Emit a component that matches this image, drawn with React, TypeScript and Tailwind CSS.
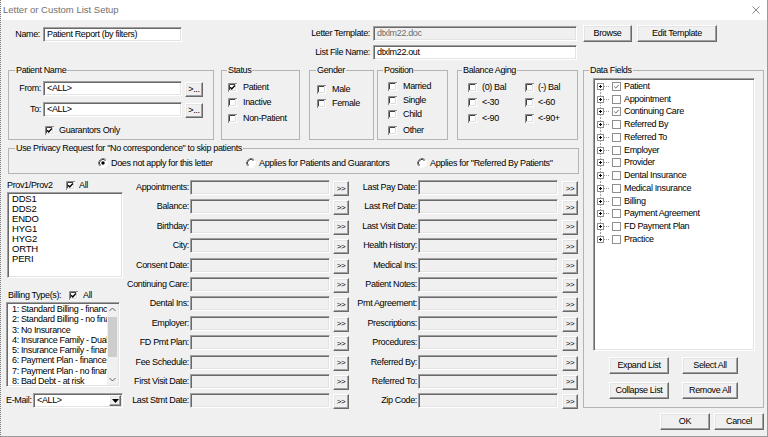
import React from "react";

const sunken =
  "border border-t-[#a0a0a0] border-l-[#a0a0a0] border-r-white border-b-white shadow-[inset_1px_1px_0_#696969,inset_-1px_-1px_0_#e3e3e3]";
const raised =
  "border border-t-white border-l-white border-r-[#696969] border-b-[#696969] shadow-[inset_-1px_-1px_0_#a0a0a0,inset_1px_1px_0_#e3e3e3] bg-[#f0f0f0]";

function Check({ checked }: { checked?: boolean }) {
  return (
    <svg width="9" height="9" viewBox="0 0 9 9" className="block shrink-0">
      <rect x="0" y="0" width="9" height="9" fill="#fff" />
      <path d="M0.5 9V0.5H9" stroke="#8a8a8a" fill="none" />
      <path d="M1.5 8V1.5H8" stroke="#404040" fill="none" />
      <path d="M1 7.5H7.5V1" stroke="#dcdcdc" fill="none" />
      {checked && (
        <path d="M2.2 4.3 L3.7 5.9 L6.9 2.6" stroke="#000" strokeWidth="1.4" fill="none" />
      )}
    </svg>
  );
}

function Radio({ checked }: { checked?: boolean }) {
  return (
    <svg width="10" height="10" viewBox="0 0 10 10" className="block shrink-0">
      <circle cx="5" cy="5" r="4.5" fill="#fff" />
      <path d="M1.82 8.18 A4.5 4.5 0 0 1 8.18 1.82" stroke="#808080" fill="none" />
      <path d="M2.5 7.5 A3.5 3.5 0 0 1 7.5 2.5" stroke="#404040" fill="none" />
      <path d="M8.18 1.82 A4.5 4.5 0 0 1 1.82 8.18" stroke="#ffffff" fill="none" />
      {checked && <circle cx="5" cy="5" r="1.7" fill="#000" />}
    </svg>
  );
}

function CheckItem({ label, checked }: { label: string; checked?: boolean }) {
  return (
    <div className="flex items-center h-[9px]">
      <Check checked={checked} />
      <span className="ml-[6px] whitespace-nowrap">{label}</span>
    </div>
  );
}

function TreeNode({
  label,
  checked,
  first,
  last,
}: {
  label: string;
  checked?: boolean;
  first?: boolean;
  last?: boolean;
}) {
  return (
    <div className="h-[12.75px] flex items-center">
      <svg width="12" height="13" viewBox="0 0 12 13" className="block shrink-0">
        {!first && (
          <line x1="3.5" y1="0" x2="3.5" y2="3" stroke="#a0a0a0" strokeDasharray="1 1" />
        )}
        {!last && (
          <line x1="3.5" y1="10" x2="3.5" y2="13" stroke="#a0a0a0" strokeDasharray="1 1" />
        )}
        <line x1="7" y1="6.5" x2="12" y2="6.5" stroke="#a0a0a0" strokeDasharray="1 1" />
        <rect x="0.5" y="3.5" width="6" height="6" fill="#fff" stroke="#919191" />
        <line x1="2" y1="6.5" x2="5" y2="6.5" stroke="#000" />
        <line x1="3.5" y1="5" x2="3.5" y2="8" stroke="#000" />
      </svg>
      <svg width="9" height="9" viewBox="0 0 9 9" className="block shrink-0 ml-[3px]">
        <rect x="0.5" y="0.5" width="8" height="8" fill="#fff" stroke="#8f8f8f" />
        {checked && (
          <path d="M2.2 4.5 L3.8 6.1 L6.8 2.8" stroke="#6a6a6a" strokeWidth="1" fill="none" />
        )}
      </svg>
      <span className="ml-[3px] whitespace-nowrap">{label}</span>
    </div>
  );
}

function Btn({ children, className }: { children: React.ReactNode; className: string }) {
  return (
    <div className={`${raised} flex items-center justify-center whitespace-nowrap ${className}`}>
      {children}
    </div>
  );
}

export default function App() {
  const leftFields = [
    "Appointments:",
    "Balance:",
    "Birthday:",
    "City:",
    "Consent Date:",
    "Continuing Care:",
    "Dental Ins:",
    "Employer:",
    "FD Pmt Plan:",
    "Fee Schedule:",
    "First Visit Date:",
    "Last Stmt Date:",
  ];
  const rightFields = [
    "Last Pay Date:",
    "Last Ref Date:",
    "Last Visit Date:",
    "Health History:",
    "Medical Ins:",
    "Patient Notes:",
    "Pmt Agreement:",
    "Prescriptions:",
    "Procedures:",
    "Referred By:",
    "Referred To:",
    "Zip Code:",
  ];
  const provs = ["DDS1", "DDS2", "ENDO", "HYG1", "HYG2", "ORTH", "PERI"];
  const billing = [
    "1: Standard Billing - finance charges",
    "2: Standard Billing - no finance charges",
    "3: No Insurance",
    "4: Insurance Family - Dual Coverage",
    "5: Insurance Family - finance charges",
    "6: Payment Plan - finance charges",
    "7: Payment Plan - no finance charges",
    "8: Bad Debt - at risk",
  ];
  const tree: [string, boolean][] = [
    ["Patient", true],
    ["Appointment", false],
    ["Continuing Care", true],
    ["Referred By", false],
    ["Referred To", false],
    ["Employer", false],
    ["Provider", false],
    ["Dental Insurance", false],
    ["Medical Insurance", false],
    ["Billing", false],
    ["Payment Agreement", false],
    ["FD Payment Plan", false],
    ["Practice", false],
  ];

  return (
    <div className="flex w-[768px] h-[437px] bg-[#f0f0f0] overflow-hidden font-['Liberation_Sans',Arial,sans-serif] text-[9px] tracking-[-0.35px] leading-none text-black">
      <div className="w-px h-full border-l border-dotted border-[#7a7a7a]" />
      <div className="w-[767px] h-full flex flex-col border-r border-b border-[#9a9a9a]">
        {/* Title bar */}
        <div className="h-[20px] shrink-0 bg-white flex items-center justify-between pl-[2px] pr-[7px]">
          <span className="text-[9.5px] tracking-normal text-[#707070]">Letter or Custom List Setup</span>
          <svg width="8" height="8" viewBox="0 0 8 8" className="block">
            <path d="M0.5 0.5 L7.5 7.5 M7.5 0.5 L0.5 7.5" stroke="#7a7a7a" strokeWidth="0.9" />
          </svg>
        </div>

        {/* Body */}
        <div className="flex-1 flex flex-col pt-[6px]">
          {/* Row A */}
          <div className="flex items-start h-[35px] shrink-0">
            <div className="flex items-center mt-[1px]">
              <span className="w-[42px] text-right pr-[3px]">Name:</span>
              <div className={`${sunken} bg-white w-[139px] h-[15px] flex items-center pl-[3px] whitespace-nowrap`}>
                Patient Report (by filters)
              </div>
            </div>
            <div className="ml-[128px] flex flex-col gap-[4px]">
              <div className="flex items-center">
                <span className="w-[63px] text-right pr-[3px] whitespace-nowrap">Letter Template:</span>
                <div className={`${sunken} bg-[#f0f0f0] w-[204px] h-[15px] flex items-center pl-[3px] text-[#6d6d6d]`}>
                  dtxlm22.doc
                </div>
              </div>
              <div className="flex items-center">
                <span className="w-[63px] text-right pr-[3px] whitespace-nowrap">List File Name:</span>
                <div className={`${sunken} bg-white w-[204px] h-[15px] flex items-center pl-[3px]`}>
                  dtxlm22.out
                </div>
              </div>
            </div>
            <Btn className="ml-[6px] -mt-[1px] w-[49px] h-[17px]">Browse</Btn>
            <Btn className="ml-[5px] -mt-[1px] w-[80px] h-[17px]">Edit Template</Btn>
          </div>

          {/* Main */}
          <div className="flex mt-[4px]">
            {/* Left main */}
            <div className="w-[582px] flex flex-col">
              {/* Row B groups */}
              <div className="flex h-[75px] pl-[7px]">
                <fieldset className="min-w-0 w-[206px] h-[75px] border border-[#b4b4b4] pl-[6px]">
                  <legend className="px-[1px] leading-[10px]">Patient Name</legend>
                  <div className="flex items-center mt-[6px] h-[15px]">
                    <span className="w-[28px] text-right pr-[2px]">From:</span>
                    <div className={`${sunken} bg-white w-[139px] h-[15px] flex items-center pl-[3px]`}>&lt;ALL&gt;</div>
                    <Btn className="ml-[3px] w-[18px] h-[15px] mt-[1px]">&gt;...</Btn>
                  </div>
                  <div className="flex items-center mt-[6px] h-[15px]">
                    <span className="w-[28px] text-right pr-[2px]">To:</span>
                    <div className={`${sunken} bg-white w-[139px] h-[15px] flex items-center pl-[3px]`}>&lt;ALL&gt;</div>
                    <Btn className="ml-[3px] w-[18px] h-[15px] mt-[1px]">&gt;...</Btn>
                  </div>
                  <div className="flex items-center mt-[9px] h-[9px] ml-[30px]">
                    <Check checked />
                    <span className="ml-[5px] whitespace-nowrap">Guarantors Only</span>
                  </div>
                </fieldset>

                <fieldset className="min-w-0 ml-[7px] w-[79px] h-[75px] border border-[#b4b4b4] pl-[5px]">
                  <legend className="px-[1px] leading-[10px]">Status</legend>
                  <div className="ml-[1px] flex flex-col">
                    <div className="mt-[8px]"><CheckItem label="Patient" checked /></div>
                    <div className="mt-[6px]"><CheckItem label="Inactive" /></div>
                    <div className="mt-[7px]"><CheckItem label="Non-Patient" /></div>
                  </div>
                </fieldset>

                <fieldset className="min-w-0 ml-[9px] w-[65px] h-[75px] border border-[#b4b4b4] pl-[6px]">
                  <legend className="px-[1px] leading-[10px]">Gender</legend>
                  <div className="ml-[1px] flex flex-col">
                    <div className="mt-[10px]"><CheckItem label="Male" /></div>
                    <div className="mt-[5px]"><CheckItem label="Female" /></div>
                  </div>
                </fieldset>

                <fieldset className="min-w-0 ml-[3px] w-[71px] h-[75px] border border-[#b4b4b4] pl-[5px]">
                  <legend className="px-[1px] leading-[10px]">Position</legend>
                  <div className="ml-[5px] flex flex-col">
                    <div className="mt-[7px]"><CheckItem label="Married" /></div>
                    <div className="mt-[5px]"><CheckItem label="Single" /></div>
                    <div className="mt-[5px]"><CheckItem label="Child" /></div>
                    <div className="mt-[7px]"><CheckItem label="Other" /></div>
                  </div>
                </fieldset>

                <fieldset className="min-w-0 ml-[9px] w-[121px] h-[75px] border border-[#b4b4b4] pl-[4px]">
                  <legend className="px-[1px] leading-[10px]">Balance Aging</legend>
                  <div className="ml-[6px] grid grid-cols-[57px_50px]">
                    <div className="mt-[8px] flex items-center h-[9px]"><Check /><span className="ml-[5px]">(0) Bal</span></div>
                    <div className="mt-[8px] flex items-center h-[9px]"><Check /><span className="ml-[4px]">(-) Bal</span></div>
                    <div className="mt-[6px] flex items-center h-[9px]"><Check /><span className="ml-[5px]">&lt;-30</span></div>
                    <div className="mt-[6px] flex items-center h-[9px]"><Check /><span className="ml-[4px]">&lt;-60</span></div>
                    <div className="mt-[7px] flex items-center h-[9px]"><Check /><span className="ml-[5px]">&lt;-90</span></div>
                    <div className="mt-[7px] flex items-center h-[9px]"><Check /><span className="ml-[4px]">&lt;-90+</span></div>
                  </div>
                </fieldset>
              </div>

              {/* Row C privacy */}
              <fieldset className="min-w-0 ml-[7px] mt-[3px] w-[571px] h-[31px] border border-[#b4b4b4] pl-[6px]">
                <legend className="px-[1px] leading-[10px] whitespace-nowrap">
                  Use Privacy Request for "No correspondence" to skip patients
                </legend>
                <div className="flex items-center mt-[5px] h-[10px] ml-[83px]">
                  <div className="w-[148px] flex items-center">
                    <Radio checked />
                    <span className="ml-[3px] whitespace-nowrap">Does not apply for this letter</span>
                  </div>
                  <div className="w-[171px] flex items-center">
                    <Radio />
                    <span className="ml-[3px] whitespace-nowrap">Applies for Patients and Guarantors</span>
                  </div>
                  <div className="flex items-center">
                    <Radio />
                    <span className="ml-[3px] whitespace-nowrap">Applies for "Referred By Patients"</span>
                  </div>
                </div>
              </fieldset>

              {/* Row D */}
              <div className="flex mt-[6px] pl-[5px]">
                {/* left lists */}
                <div className="w-[118px] flex flex-col">
                  <div className="flex items-center h-[10px]">
                    <span className="ml-[1px] w-[59px] whitespace-nowrap">Prov1/Prov2</span>
                    <Check checked />
                    <span className="ml-[4px]">All</span>
                  </div>
                  <div className={`${sunken} bg-white ml-[1px] mt-[2px] w-[116px] h-[86px] pl-[4px] pt-[1px] text-[9.5px] tracking-[-0.2px]`}>
                    {provs.map((p) => (
                      <div key={p} className="h-[10px] leading-[10px]">{p}</div>
                    ))}
                  </div>
                  <div className="flex items-center mt-[13px] h-[9px]">
                    <span className="ml-[2px] w-[61px] whitespace-nowrap">Billing Type(s):</span>
                    <Check checked />
                    <span className="ml-[5px]">All</span>
                  </div>
                  <div className={`${sunken} bg-white mt-[2px] w-[114px] h-[85px] flex overflow-hidden`}>
                    <div className="flex-1 min-w-0 overflow-hidden pl-[5px] pt-[1px]">
                      {billing.map((b) => (
                        <div key={b} className="h-[10.3px] leading-[10.3px] whitespace-nowrap overflow-hidden">{b}</div>
                      ))}
                    </div>
                    <div className="w-[11px] shrink-0 flex flex-col bg-[#f0f0f0] mt-[1px] mb-[1px] mr-[1px]">
                      <div className="h-[11px] flex items-center justify-center">
                        <svg width="7" height="5" viewBox="0 0 7 5" className="block">
                          <path d="M0.5 4 L3.5 1 L6.5 4" stroke="#606060" fill="none" />
                        </svg>
                      </div>
                      <div className="mt-[2px] h-[40px] mx-[1px] bg-[#cdcdcd]" />
                      <div className="flex-1" />
                      <div className="h-[11px] flex items-center justify-center">
                        <svg width="7" height="5" viewBox="0 0 7 5" className="block">
                          <path d="M0.5 1 L3.5 4 L6.5 1" stroke="#606060" fill="none" />
                        </svg>
                      </div>
                    </div>
                  </div>
                  <div className="flex items-center mt-[6px] h-[15px]">
                    <span className="w-[27px] whitespace-nowrap">E-Mail:</span>
                    <div className={`${sunken} bg-white w-[90px] h-[15px] flex items-center justify-between pl-[3px] pr-[1px]`}>
                      <span>&lt;ALL&gt;</span>
                      <div className={`${raised} w-[12px] h-[11px] flex items-center justify-center`}>
                        <svg width="7" height="4" viewBox="0 0 7 4" className="block">
                          <path d="M0 0 H7 L3.5 4 Z" fill="#000" />
                        </svg>
                      </div>
                    </div>
                  </div>
                </div>

                {/* fields */}
                <div className="flex flex-col">
                  {leftFields.map((lf, i) => (
                    <div key={lf} className="h-[19.4px] flex items-start">
                      <span className="w-[66px] h-[15px] flex items-center justify-end pr-[1px] whitespace-nowrap">{lf}</span>
                      <div className={`${sunken} bg-[#f0f0f0] w-[140px] h-[15px]`} />
                      <Btn className="ml-[3px] mt-[1px] w-[16px] h-[15px] text-[8px]">&gt;&gt;</Btn>
                      <span className="w-[69px] h-[15px] flex items-center justify-end pr-[1px] whitespace-nowrap">{rightFields[i]}</span>
                      <div className={`${sunken} bg-[#f0f0f0] w-[140px] h-[15px]`} />
                      <Btn className="ml-[4px] mt-[1px] w-[16px] h-[15px] text-[8px]">&gt;&gt;</Btn>
                    </div>
                  ))}
                </div>
              </div>
            </div>

            {/* Right column */}
            <div className="w-[181px] flex flex-col">
              <fieldset className="min-w-0 w-[181px] h-[343px] border border-[#b4b4b4] pl-[5px]">
                <legend className="px-[1px] leading-[10px]">Data Fields</legend>
                <div className={`${sunken} bg-white ml-[4px] mt-[3px] w-[162px] h-[273px] pl-[3px] pt-[1px]`}>
                  {tree.map(([t, c], i) => (
                    <TreeNode key={t} label={t} checked={c} first={i === 0} last={i === tree.length - 1} />
                  ))}
                </div>
                <div className="flex mt-[6px]">
                  <Btn className="ml-[20px] w-[60px] h-[17px]">Expand List</Btn>
                  <Btn className="ml-[13px] w-[56px] h-[17px]">Select All</Btn>
                </div>
                <div className="flex mt-[8px]">
                  <Btn className="ml-[20px] w-[60px] h-[17px]">Collapse List</Btn>
                  <Btn className="ml-[13px] w-[56px] h-[17px]">Remove All</Btn>
                </div>
              </fieldset>
              <div className="flex justify-end gap-[4px] mt-[5px]">
                <Btn className="w-[50px] h-[17px]">OK</Btn>
                <Btn className="w-[50px] h-[17px]">Cancel</Btn>
              </div>
            </div>
          </div>
        </div>
      </div>
    </div>
  );
}
